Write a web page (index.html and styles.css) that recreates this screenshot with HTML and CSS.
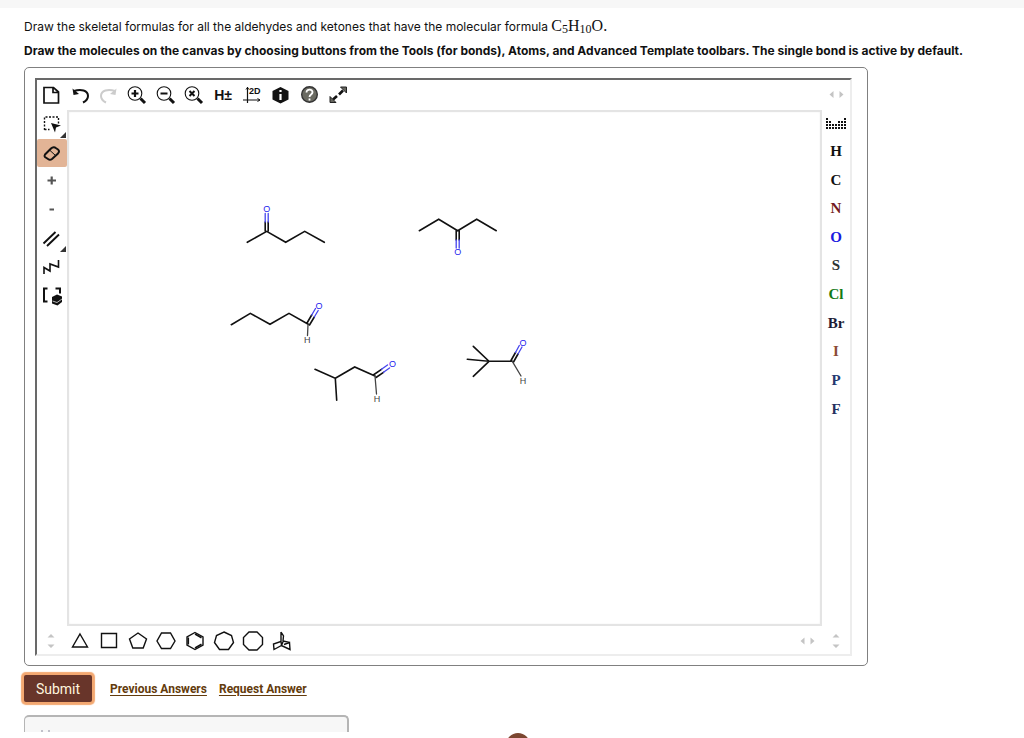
FILE: index.html
```html
<!DOCTYPE html>
<html lang="en">
<head>
<meta charset="utf-8">
<title>Aldehydes and ketones</title>
<link rel="stylesheet" href="styles.css">
</head>
<body>
<div class="strip"></div>
<main class="page">
  <p class="question">Draw the skeletal formulas for all the aldehydes and ketones that have the molecular formula <span class="formula">C<sub>5</sub>H<sub>10</sub>O.</span></p>
  <p class="hint">Draw the molecules on the canvas by choosing buttons from the Tools (for bonds), Atoms, and Advanced Template toolbars. The single bond is active by default.</p>

  <section class="card">
    <div class="editor">
      <div class="bar bar-top">
        <div class="tools tools-top">
          <button class="tool" aria-label="New"><svg class="icon" viewBox="0 0 24 24"><path d="M5 4.500h9.500l5 4.500v11H5zM14 4.500v5h5.500" stroke-width="1.700"/></svg></button>
          <button class="tool" aria-label="Undo"><svg class="icon" viewBox="0 0 24 24"><path d="M6 8c7-2.500 14-.5 14 5 0 3-2 5-5 6.500" stroke-width="2"/><path class="fill" d="M4.500 5.500l1 6.500 5.500-1z"/></svg></button>
          <button class="tool off" aria-label="Redo"><svg class="icon" viewBox="0 0 24 24"><path d="M18 8c-7-2.500-14-.5-14 5 0 3 2 5 5 6.500" stroke-width="2"/><path class="fill" d="M19.500 5.500l-1 6.500-5.500-1z"/></svg></button>
          <button class="tool" aria-label="Zoom in"><svg class="icon" viewBox="0 0 24 24"><circle cx="10" cy="10.500" r="6.800" stroke-width="1.100"/><path d="M6.500 10.500h7M10 7v7" stroke-width="2.200"/><path d="M15.500 15.500l4.500 4.500" stroke-width="3"/></svg></button>
          <button class="tool" aria-label="Zoom out"><svg class="icon" viewBox="0 0 24 24"><circle cx="10" cy="10.500" r="6.800" stroke-width="1.100"/><path d="M6.500 10.500h7" stroke-width="2"/><path d="M15.500 15.500l4.500 4.500" stroke-width="3"/></svg></button>
          <button class="tool" aria-label="Reset zoom"><svg class="icon" viewBox="0 0 24 24"><circle cx="10" cy="10.500" r="6.800" stroke-width="1.100"/><path d="M7.500 8l5 5M12.500 8l-5 5" stroke-width="2"/><path d="M15.500 15.500l4.500 4.500" stroke-width="3"/></svg></button>
          <button class="tool hydrogens">H±</button>
          <button class="tool" aria-label="Clean 2D"><svg class="icon" viewBox="0 0 24 24"><path d="M7.500 4v16M3 17h17" stroke-width="1.200"/><path d="M6 6.500l1.500-2 1.500 2M17.500 15.500l2.500 1.500-2.500 1.500" stroke-width="1"/><text class="label" x="9" y="11">2D</text></svg></button>
          <button class="tool" aria-label="Information"><svg class="icon" viewBox="0 0 24 24"><path class="fill" d="M12.500 4l8 4v8.500l-8 4-8-4V8z"/><path class="white" d="M12.500 11v6M12.500 7v2" stroke-width="2.200"/></svg></button>
          <button class="tool" aria-label="Help"><svg class="icon" viewBox="0 0 24 24"><circle class="disc" cx="12.500" cy="11.500" r="7.800"/><path class="white" d="M9.500 9.500c0-4 6.500-3.500 6 0-.3 2-3 2-3 4.500M12.500 15.500v2" stroke-width="1.800"/></svg></button>
          <button class="tool" aria-label="Full screen"><svg class="icon" viewBox="0 0 24 24"><path d="M7 16.500l4-3.500M13 11.500l4-4" stroke-width="2.600"/><path class="gray" d="M14.500 4h6v6zM4 13.500v6h6z"/></svg></button>
        </div>
        <button class="pager" aria-label="Scroll toolbar"><svg class="arrows" viewBox="0 0 16 16"><path d="M5.500 4v7L1.500 7.500zM11.500 4v7l4-3.500z"/></svg></button>
      </div>

      <div class="tools tools-left">
        <button class="tool more" aria-label="Select"><svg class="icon" viewBox="0 0 24 24"><path d="M4.500 18V5h14v7M4.500 17.500h5" stroke-width="1.400" stroke-dasharray="2 1.500"/><path class="fill" d="M11 11l10 2.500-5 2-1 5z"/></svg></button>
        <button class="tool active" aria-label="Erase"><svg class="icon" viewBox="0 0 24 24"><path d="M5 13.500l6-6q2-2 4-1l3 2q2 1.500 0 4l-6 5.500q-2 1.500-4 0l-3-2q-1-1 0-2.500z" stroke-width="2"/><path d="M9.500 9l6 5.500" stroke-width="1"/></svg></button>
        <button class="tool" aria-label="Increase charge"><svg class="icon" viewBox="0 0 24 24"><path class="charge" d="M7.500 11.500h8.500M11.700 7.500v8" stroke-width="2.200"/></svg></button>
        <button class="tool" aria-label="Decrease charge"><svg class="icon" viewBox="0 0 24 24"><path class="charge" d="M9.500 11.500h4.500" stroke-width="2"/></svg></button>
        <button class="tool more" aria-label="Double bond"><svg class="icon" viewBox="0 0 24 24"><path d="M3.500 16.500L15.500 5M7 19L19 7.500" stroke-width="1.900"/></svg></button>
        <button class="tool" aria-label="Chain"><svg class="icon" viewBox="0 0 24 24"><path d="M4 19v-6.500l6 3.500V9l8.500 3V5" stroke-width="1.600"/></svg></button>
        <button class="tool" aria-label="Template library"><svg class="icon" viewBox="0 0 24 24"><path d="M7.500 4.500H4v13h3.500M15.500 4.500h4.500v5" stroke-width="2"/><path class="fill" d="M12 13l5-2.500 5 2v5.500l-4.500 3.500-5.500-2z"/><path class="white" d="M12.500 17l4.500 1.500 5-3.500" stroke-width=".7"/></svg></button>
      </div>

      <div class="canvas">
        <svg class="drawing" role="img" aria-label="Five skeletal formulas">
          <g transform="translate(-69 -112)">
            <g class="bond">
              <path d="M247.300 242.300L266.700 231.300L285.700 242.300L304.700 231.300L324.300 242.300M265.200 231V222M268.200 231V222"/>
              <path d="M419.300 230.700L438.700 219.300L457.700 230.700L476.700 219.300L496.300 230.700M456.200 231V240M459.200 231V240"/>
              <path d="M231.300 324.700L250.300 313.300L270 324.300L289 313.300L308.300 324.300M307 323L311.700 315M309.500 325L314.300 317"/>
              <path d="M315 369.300L335.300 378.300L336.700 400.300M335.300 378.300L354.700 367L375 376M374 374.500L381.500 369.300M376 377.500L383.500 372.300"/>
              <path d="M473.300 346.300L489 361.300L512.300 361.300M467.300 359.300L489 361.300L473.300 376.300M511 360.500L515.500 352.500M513.500 362L518 354"/>
            </g>
            <path class="bond hydrogen" d="M308 324.500L307.500 335.500M375 376L376.500 394M512.300 361.300L521 376"/>
            <g class="bond oxygen">
              <path d="M265.200 222V213.500M268.200 222V213.500M456.200 240V248M459.200 240V248M311.700 315L315.500 308.500M314.300 317L318.200 310.500M381.500 369.300L387.500 365M383.500 372.300L389.500 368M515.500 352.500L519.300 345.500M518 354L522 347"/>
            </g>
            <g class="atom oxygen"><text x="266.700" y="212.300">O</text><text x="457.700" y="255.300">O</text><text x="319" y="309">O</text><text x="392.500" y="366.500">O</text><text x="523" y="345.500">O</text></g>
            <g class="atom"><text x="307.300" y="343.300">H</text><text x="377" y="402">H</text><text x="523" y="383.500">H</text></g>
          </g>
        </svg>
      </div>

      <div class="tools tools-right">
        <button class="tool" aria-label="Periodic table"><svg class="icon" viewBox="0 0 24 24"><path d="M3 17V5M6 17V8M9 17v-6M12 17v-6M15 17V8M18 17V8M21 17V5" stroke-width="2" stroke-dasharray="2 1"/><path class="gaps" d="M4.500 4v14M7.500 4v14M10.500 4v14M13.500 4v14M16.500 4v14M19.500 4v14"/></svg></button>
        <button class="tool element">H</button>
        <button class="tool element">C</button>
        <button class="tool element nitrogen">N</button>
        <button class="tool element oxygen-key">O</button>
        <button class="tool element sulfur">S</button>
        <button class="tool element chlorine">Cl</button>
        <button class="tool element bromine">Br</button>
        <button class="tool element iodine">I</button>
        <button class="tool element phosphorus">P</button>
        <button class="tool element fluorine">F</button>
      </div>

      <div class="bar bar-bottom">
        <div class="tools tools-bottom">
          <button class="tool" aria-label="Scroll tools"><svg class="arrows" viewBox="0 0 16 16"><path d="M4.500 4.500h7L8 1zM4.500 11.500h7L8 15z"/></svg></button>
          <button class="tool" aria-label="Cyclopropane"><svg class="icon shape" viewBox="0 0 24 24"><path d="M12 5l7.500 13h-15z"/></svg></button>
          <button class="tool" aria-label="Cyclobutane"><svg class="icon shape" viewBox="0 0 24 24"><path d="M4.500 4.500h15v14h-15z"/></svg></button>
          <button class="tool" aria-label="Cyclopentane"><svg class="icon shape" viewBox="0 0 24 24"><path d="M12 4l8.500 6-3.300 9H6.800L3.500 10z"/></svg></button>
          <button class="tool" aria-label="Cyclohexane"><svg class="icon shape" viewBox="0 0 24 24"><path d="M7.500 4h9l4.500 8-4.500 7.500h-9L3 12z"/></svg></button>
          <button class="tool" aria-label="Benzene"><svg class="icon shape" viewBox="0 0 24 24"><path d="M12 3.500l8 4.500v8l-8 4.500L4 16V8z"/><path d="M12 5l6.500 3.700M18.500 15.300L12 19M5.300 8.500v7" stroke-width="1.600"/></svg></button>
          <button class="tool" aria-label="Cycloheptane"><svg class="icon shape" viewBox="0 0 24 24"><path d="M12 3l7.500 3.500 2 7-5 7h-9l-5-7 2-7z"/></svg></button>
          <button class="tool" aria-label="Cyclooctane"><svg class="icon shape" viewBox="0 0 24 24"><path d="M8 3h8l5.500 5.500v7L16 21H8l-5.500-5.500v-7z"/></svg></button>
          <button class="tool" aria-label="Bicyclic template"><svg class="icon shape" viewBox="0 0 24 24"><path d="M11 3v9.500L3.500 15l.5 5.500 7.500-4 8.500 4-.5-7L14 15.500M11 3l2.500 4-.5 5 6.500 1.500M11 12.500l.5 4M11.500 16.500l2-5" stroke-width="1.400"/></svg></button>
        </div>
        <div class="pagers">
          <button class="pager" aria-label="Scroll templates"><svg class="arrows" viewBox="0 0 16 16"><path d="M4.500 4.500v7l-4-3.500zM10.500 4.500v7l4-3.500z"/></svg></button>
          <button class="pager" aria-label="Scroll atoms"><svg class="arrows" viewBox="0 0 16 16"><path d="M4.500 4.500h7L8 1zM4.500 11.500h7L8 15z"/></svg></button>
        </div>
      </div>
    </div>
  </section>

  <div class="actions">
    <button class="submit">Submit</button>
    <a class="link" href="#previous">Previous Answers</a>
    <a class="link" href="#request">Request Answer</a>
  </div>

  <div class="panel"><svg class="marks" viewBox="0 0 12 2"><path d="M1 1h2M8 1h2"/></svg></div>
</main>
<footer class="footer"><svg class="badge" viewBox="0 0 24 24"><circle cx="12" cy="12" r="12"/></svg></footer>
</body>
</html>
```
FILE: styles.css
```css
* { box-sizing: border-box; }
html, body { height: 100%; }
body {
  margin: 0;
  overflow: hidden;
  background: #fff;
  color: #111;
  font: 12px/24px "Liberation Sans", Arial, sans-serif;
}
button { margin: 0; padding: 0; border: 0; background: none; color: inherit; font: inherit; }
.strip { height: 8px; background: #f7f7f7; }
.page { padding: 7px 24px 0; }
.question, .hint { margin: 0; font: 12px/24px Inter, Arial, sans-serif; }
.hint { font-weight: 700; }
.formula { font: 16px/16px "Liberation Serif", serif; }
.formula sub { font-size: 12px; line-height: 1px; vertical-align: -2px; }

.card {
  max-width: 844px;
  margin-top: 4px;
  padding: 10px 15px 9px 10px;
  border: 1px solid #808080;
  border-radius: 5px;
}
.editor {
  display: grid;
  grid-template-columns: 30px 1fr 28px;
  grid-template-rows: 30px auto 28px;
  border: 2px solid #ededed;
  border-top-color: #696969;
  border-left-color: #696969;
}
.bar { grid-column: 1 / -1; display: flex; justify-content: space-between; align-items: center; }
.bar-bottom { padding-top: 2px; }
.tools { display: grid; grid-auto-rows: 1fr; }
.tools-top { width: 315px; grid-template-columns: repeat(11, 1fr); }
.tools-bottom { width: 259px; grid-template-columns: repeat(9, 1fr); }
.tools-left { height: 200px; }
.tools-right { height: 315px; }
.tool { position: relative; display: flex; align-items: center; justify-content: center; }
.tool.active { background: #e2b496; border-radius: 2px; }
.tool.more::after {
  content: "";
  position: absolute;
  right: 1px;
  bottom: 1px;
  border: 3px solid #333;
  border-top-color: transparent;
  border-left-color: transparent;
}
.tool.off { color: #ccc; }
.icon { width: 24px; height: 24px; fill: none; stroke: currentColor; }
.icon .fill { fill: currentColor; stroke: none; }
.icon .gray { fill: #66665f; stroke: #222; }
.icon .disc { fill: #6b6b62; stroke: #333; stroke-width: 1.4; }
.icon .white { stroke: #fff; }
.icon .gaps { stroke: #fff; }
.icon .charge { stroke: #555; }
.icon .label { fill: currentColor; stroke: none; font: bold 9px "Liberation Sans", sans-serif; }
.shape { stroke-width: 1.4; }
.hydrogens { font-size: 14px; font-weight: bold; }
.pager { display: flex; align-items: center; justify-content: center; width: 28px; height: 26px; }
.pagers { display: flex; }
.arrows { width: 16px; height: 16px; fill: #c4c4c4; }

.canvas { border: 2px solid #e4e4e4; box-shadow: inset 0 0 2px #eee; }
.drawing { display: block; width: 100%; height: 512px; }
.bond { fill: none; stroke: #111; stroke-width: 1.6; stroke-linecap: round; }
.bond.hydrogen { stroke: #444; stroke-width: 1.3; }
.bond.oxygen { stroke: #4444ee; stroke-width: 1.3; }
.atom { fill: #444; font: 9px "Liberation Sans", sans-serif; text-anchor: middle; }
.atom.oxygen { fill: #2222ee; }

.element { padding-bottom: 4px; font: bold 15px/20px "Liberation Serif", serif; }
.nitrogen { color: #741b22; }
.oxygen-key { color: #1a1ae0; }
.sulfur { color: #2e3433; }
.chlorine { color: #147a14; }
.bromine { color: #1c1c35; }
.iodine { color: #8b4a38; }
.phosphorus { color: #24386f; }
.fluorine { color: #24305e; }

.actions { display: flex; align-items: center; gap: 12px; margin-top: 9px; }
.submit {
  width: 68px;
  height: 27px;
  margin-right: 6px;
  border-radius: 2px;
  background: #68352a;
  box-shadow: 0 0 1px 3px #f3a871;
  color: #fff5df;
  font-family: Roboto, Arial, sans-serif;
  font-size: 14px;
}
.link { color: #633b0c; font: bold 12px/24px Roboto, Arial, sans-serif; text-underline-offset: 2px; }
.panel {
  display: flex;
  align-items: flex-end;
  width: 325px;
  max-width: 100%;
  height: 17px;
  margin-top: 13px;
  padding-left: 15px;
  border: 2px solid #b5b5b5;
  border-left-width: 1px;
  border-bottom: 0;
  border-radius: 5px 5px 0 0;
  background: #f7f7f7;
}
.marks { width: 12px; height: 2px; stroke: #8a8a9c; }
.footer { display: flex; justify-content: center; padding: 1px 0 0 12px; }
.badge { width: 24px; height: 24px; fill: #7b4630; }
```
